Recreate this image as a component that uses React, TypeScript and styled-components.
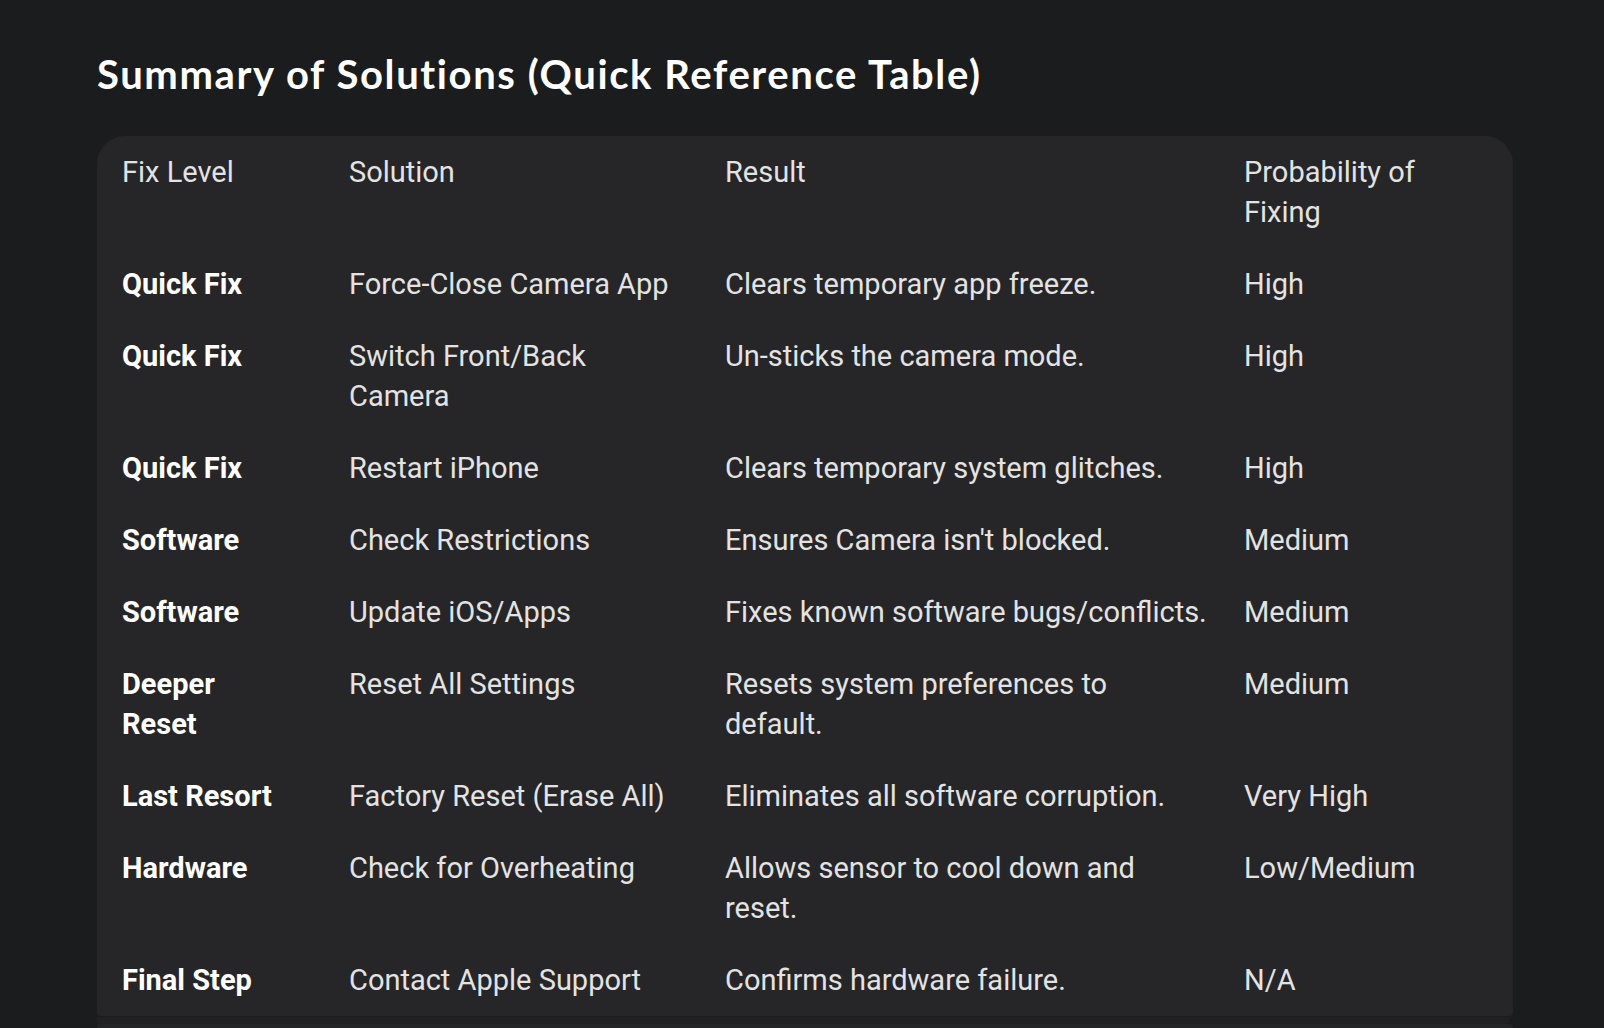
import React from 'react'
import styled, { createGlobalStyle } from 'styled-components'

const rows = [
  { level: 'Quick Fix', solution: 'Force-Close Camera App', result: 'Clears temporary app freeze.', chance: 'High' },
  { level: 'Quick Fix', solution: 'Switch Front/Back Camera', result: 'Un-sticks the camera mode.', chance: 'High' },
  { level: 'Quick Fix', solution: 'Restart iPhone', result: 'Clears temporary system glitches.', chance: 'High' },
  { level: 'Software', solution: 'Check Restrictions', result: "Ensures Camera isn't blocked.", chance: 'Medium' },
  { level: 'Software', solution: 'Update iOS/Apps', result: 'Fixes known software bugs/conflicts.', chance: 'Medium' },
  { level: 'Deeper Reset', solution: 'Reset All Settings', result: 'Resets system preferences to\ndefault.', chance: 'Medium' },
  { level: 'Last Resort', solution: 'Factory Reset (Erase All)', result: 'Eliminates all software corruption.', chance: 'Very High' },
  { level: 'Hardware', solution: 'Check for Overheating', result: 'Allows sensor to cool down and\nreset.', chance: 'Low/Medium' },
  { level: 'Final Step', solution: 'Contact Apple Support', result: 'Confirms hardware failure.', chance: 'N/A' },
]

const columns = [227, 376, 519, 268]

export default function App() {
  return (
    <>
      <GlobalStyle />
      <Page>
        <Title>Summary of Solutions (Quick Reference Table)</Title>
        <TablePanel>
          <Table>
            <colgroup>
              {columns.map((w, i) => (
                <col key={i} style={{ width: w }} />
              ))}
            </colgroup>
            <thead>
              <tr>
                <HeadCell>Fix Level</HeadCell>
                <HeadCell>Solution</HeadCell>
                <HeadCell>Result</HeadCell>
                <HeadCell>Probability of Fixing</HeadCell>
              </tr>
            </thead>
            <tbody>
              {rows.map((r, i) => (
                <tr key={i}>
                  <Cell $strong>{r.level}</Cell>
                  <Cell>{r.solution}</Cell>
                  <Cell>{r.result}</Cell>
                  <Cell>{r.chance}</Cell>
                </tr>
              ))}
            </tbody>
          </Table>
        </TablePanel>
        <ScrollTrack />
        <NextBlock />
      </Page>
    </>
  )
}

const GlobalStyle = createGlobalStyle`
  html, body {
    margin: 0;
    background: #1b1c1e;
    overflow: hidden;
  }
  body {
    font-family: Roboto, 'Noto Sans', sans-serif;
    color: #e3e3e3;
  }
`

const Page = styled.div`
  width: 1416px;
  height: 978px;
  padding: 50px 0 0 97px;
`

const Title = styled.h2`
  margin: 0 0 38px;
  font-family: Lato, sans-serif;
  font-size: 40px;
  line-height: 48px;
  font-weight: 700;
  letter-spacing: 1.6px;
  color: #ffffff;
`

const TablePanel = styled.div`
  background: #262628;
  border-radius: 28px 28px 4px 4px;
  padding: 0 13px;
`

const Table = styled.table`
  width: 100%;
  table-layout: fixed;
  border-collapse: collapse;

  th:first-child,
  td:first-child {
    padding-right: 60px;
  }

  td:nth-child(3) {
    padding-right: 8px;
  }
`

const HeadCell = styled.th`
  padding: 16px 28px 16px 12px;
  text-align: left;
  vertical-align: top;
  font-size: 29px;
  line-height: 40px;
  font-weight: 400;
  color: #e3e3e3;
`

const Cell = styled.td<{ $strong?: boolean }>`
  padding: 16px 28px 16px 12px;
  vertical-align: top;
  white-space: pre-line;
  font-size: 29px;
  line-height: 40px;
  font-weight: ${(p) => (p.$strong ? 700 : 400)};
  color: ${(p) => (p.$strong ? '#ffffff' : '#e3e3e3')};
`

const ScrollTrack = styled.div`
  margin: 1px 4px 0 0;
  height: 7px;
  background: #1f2022;
  border-radius: 0 0 4px 4px;
`

const NextBlock = styled.div`
  height: 20px;
  background: #242527;
  border-radius: 4px 4px 0 0;
`
